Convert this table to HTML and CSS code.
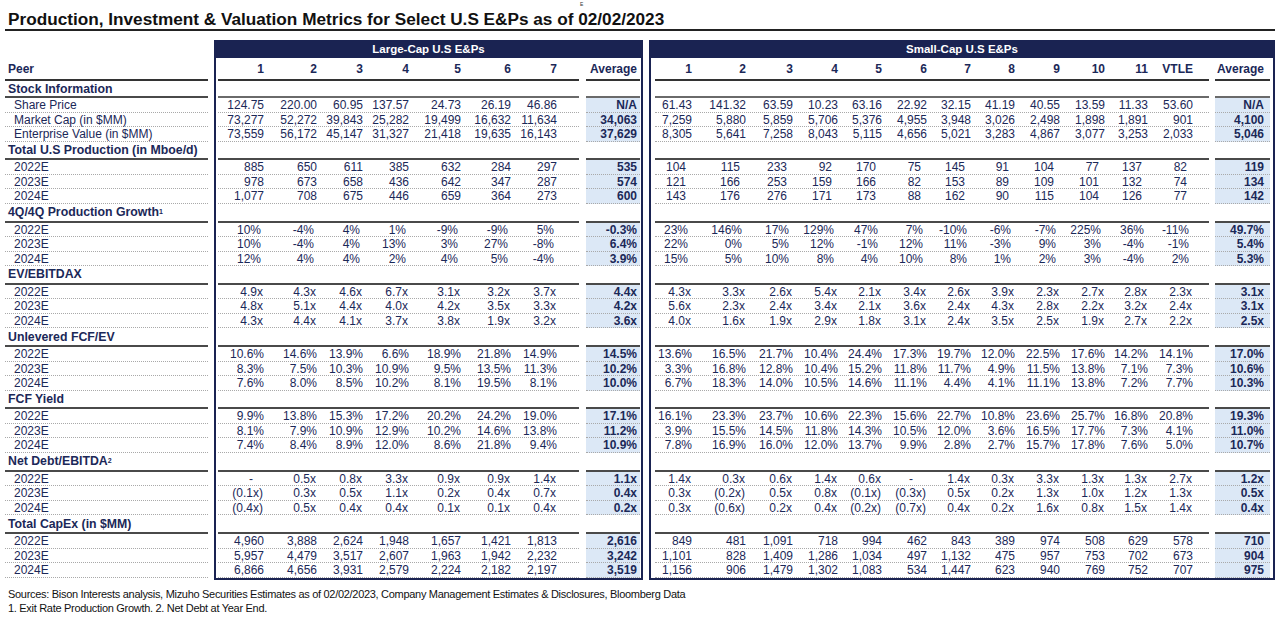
FILE: index.html
```html
<!DOCTYPE html>
<html>
<head>
<meta charset="utf-8">
<link rel="stylesheet" href="styles.css">
</head>
<body>
<div class="page">
  <div class="tiny">E</div>
  <h1 class="title">Production, Investment &amp; Valuation Metrics for Select U.S E&amp;Ps as of 02/02/2023</h1>
  <div class="tables">
    <div class="labels">
      <div class="spacer"></div>
      <div class="hd">Peer</div>
      <div class="sec first">Stock Information</div>
      <div class="row">Share Price</div>
      <div class="row">Market Cap (in $MM)</div>
      <div class="row">Enterprise Value (in $MM)</div>
      <div class="sec">Total U.S Production (in Mboe/d)</div>
      <div class="row">2022E</div><div class="row">2023E</div><div class="row">2024E</div>
      <div class="sec">4Q/4Q Production Growth<sup>1</sup></div>
      <div class="row">2022E</div><div class="row">2023E</div><div class="row">2024E</div>
      <div class="sec">EV/EBITDAX</div>
      <div class="row">2022E</div><div class="row">2023E</div><div class="row">2024E</div>
      <div class="sec">Unlevered FCF/EV</div>
      <div class="row">2022E</div><div class="row">2023E</div><div class="row">2024E</div>
      <div class="sec">FCF Yield</div>
      <div class="row">2022E</div><div class="row">2023E</div><div class="row">2024E</div>
      <div class="sec">Net Debt/EBITDA<sup>2</sup></div>
      <div class="row">2022E</div><div class="row">2023E</div><div class="row">2024E</div>
      <div class="sec">Total CapEx (in $MM)</div>
      <div class="row">2022E</div><div class="row">2023E</div><div class="row">2024E</div>
    </div>

    <div class="panel lp">
      <div class="band">Large-Cap U.S E&amp;Ps</div>
      <div class="hd"><div class="d"><span>1</span><span>2</span><span>3</span><span>4</span><span>5</span><span>6</span><span>7</span></div><div class="a">Average</div></div>
      <div class="sec first"><div class="d"></div><div class="a"></div></div>
      <div class="row"><div class="d"><span>124.75</span><span>220.00</span><span>60.95</span><span>137.57</span><span>24.73</span><span>26.19</span><span>46.86</span></div><div class="a">N/A</div></div>
      <div class="row"><div class="d"><span>73,277</span><span>52,272</span><span>39,843</span><span>25,282</span><span>19,499</span><span>16,632</span><span>11,634</span></div><div class="a">34,063</div></div>
      <div class="row"><div class="d"><span>73,559</span><span>56,172</span><span>45,147</span><span>31,327</span><span>21,418</span><span>19,635</span><span>16,143</span></div><div class="a">37,629</div></div>
      <div class="sec"><div class="d"></div><div class="a"></div></div>
      <div class="row"><div class="d"><span>885</span><span>650</span><span>611</span><span>385</span><span>632</span><span>284</span><span>297</span></div><div class="a">535</div></div>
      <div class="row"><div class="d"><span>978</span><span>673</span><span>658</span><span>436</span><span>642</span><span>347</span><span>287</span></div><div class="a">574</div></div>
      <div class="row"><div class="d"><span>1,077</span><span>708</span><span>675</span><span>446</span><span>659</span><span>364</span><span>273</span></div><div class="a">600</div></div>
      <div class="sec"><div class="d"></div><div class="a"></div></div>
      <div class="row g"><div class="d"><span>10%</span><span>-4%</span><span>4%</span><span>1%</span><span>-9%</span><span>-9%</span><span>5%</span></div><div class="a">-0.3%</div></div>
      <div class="row g"><div class="d"><span>10%</span><span>-4%</span><span>4%</span><span>13%</span><span>3%</span><span>27%</span><span>-8%</span></div><div class="a">6.4%</div></div>
      <div class="row g"><div class="d"><span>12%</span><span>4%</span><span>4%</span><span>2%</span><span>4%</span><span>5%</span><span>-4%</span></div><div class="a">3.9%</div></div>
      <div class="sec"><div class="d"></div><div class="a"></div></div>
      <div class="row x"><div class="d"><span>4.9x</span><span>4.3x</span><span>4.6x</span><span>6.7x</span><span>3.1x</span><span>3.2x</span><span>3.7x</span></div><div class="a">4.4x</div></div>
      <div class="row x"><div class="d"><span>4.8x</span><span>5.1x</span><span>4.4x</span><span>4.0x</span><span>4.2x</span><span>3.5x</span><span>3.3x</span></div><div class="a">4.2x</div></div>
      <div class="row x"><div class="d"><span>4.3x</span><span>4.4x</span><span>4.1x</span><span>3.7x</span><span>3.8x</span><span>1.9x</span><span>3.2x</span></div><div class="a">3.6x</div></div>
      <div class="sec"><div class="d"></div><div class="a"></div></div>
      <div class="row"><div class="d"><span>10.6%</span><span>14.6%</span><span>13.9%</span><span>6.6%</span><span>18.9%</span><span>21.8%</span><span>14.9%</span></div><div class="a">14.5%</div></div>
      <div class="row"><div class="d"><span>8.3%</span><span>7.5%</span><span>10.3%</span><span>10.9%</span><span>9.5%</span><span>13.5%</span><span>11.3%</span></div><div class="a">10.2%</div></div>
      <div class="row"><div class="d"><span>7.6%</span><span>8.0%</span><span>8.5%</span><span>10.2%</span><span>8.1%</span><span>19.5%</span><span>8.1%</span></div><div class="a">10.0%</div></div>
      <div class="sec"><div class="d"></div><div class="a"></div></div>
      <div class="row"><div class="d"><span>9.9%</span><span>13.8%</span><span>15.3%</span><span>17.2%</span><span>20.2%</span><span>24.2%</span><span>19.0%</span></div><div class="a">17.1%</div></div>
      <div class="row"><div class="d"><span>8.1%</span><span>7.9%</span><span>10.9%</span><span>12.9%</span><span>10.2%</span><span>14.6%</span><span>13.8%</span></div><div class="a">11.2%</div></div>
      <div class="row"><div class="d"><span>7.4%</span><span>8.4%</span><span>8.9%</span><span>12.0%</span><span>8.6%</span><span>21.8%</span><span>9.4%</span></div><div class="a">10.9%</div></div>
      <div class="sec"><div class="d"></div><div class="a"></div></div>
      <div class="row x"><div class="d"><span class="dash">-</span><span>0.5x</span><span>0.8x</span><span>3.3x</span><span>0.9x</span><span>0.9x</span><span>1.4x</span></div><div class="a">1.1x</div></div>
      <div class="row x"><div class="d"><span>(0.1x)</span><span>0.3x</span><span>0.5x</span><span>1.1x</span><span>0.2x</span><span>0.4x</span><span>0.7x</span></div><div class="a">0.4x</div></div>
      <div class="row x"><div class="d"><span>(0.4x)</span><span>0.5x</span><span>0.4x</span><span>0.4x</span><span>0.1x</span><span>0.1x</span><span>0.4x</span></div><div class="a">0.2x</div></div>
      <div class="sec"><div class="d"></div><div class="a"></div></div>
      <div class="row"><div class="d"><span>4,960</span><span>3,888</span><span>2,624</span><span>1,948</span><span>1,657</span><span>1,421</span><span>1,813</span></div><div class="a">2,616</div></div>
      <div class="row"><div class="d"><span>5,957</span><span>4,479</span><span>3,517</span><span>2,607</span><span>1,963</span><span>1,942</span><span>2,232</span></div><div class="a">3,242</div></div>
      <div class="row"><div class="d"><span>6,866</span><span>4,656</span><span>3,931</span><span>2,579</span><span>2,224</span><span>2,182</span><span>2,197</span></div><div class="a">3,519</div></div>
    </div>

    <div class="panel rp">
      <div class="band">Small-Cap U.S E&amp;Ps</div>
      <div class="hd"><div class="d"><span>1</span><span>2</span><span>3</span><span>4</span><span>5</span><span>6</span><span>7</span><span>8</span><span>9</span><span>10</span><span>11</span><span>VTLE</span></div><div class="a">Average</div></div>
      <div class="sec first"><div class="d"></div><div class="a"></div></div>
      <div class="row"><div class="d"><span>61.43</span><span>141.32</span><span>63.59</span><span>10.23</span><span>63.16</span><span>22.92</span><span>32.15</span><span>41.19</span><span>40.55</span><span>13.59</span><span>11.33</span><span>53.60</span></div><div class="a">N/A</div></div>
      <div class="row"><div class="d"><span>7,259</span><span>5,880</span><span>5,859</span><span>5,706</span><span>5,376</span><span>4,955</span><span>3,948</span><span>3,026</span><span>2,498</span><span>1,898</span><span>1,891</span><span>901</span></div><div class="a">4,100</div></div>
      <div class="row"><div class="d"><span>8,305</span><span>5,641</span><span>7,258</span><span>8,043</span><span>5,115</span><span>4,656</span><span>5,021</span><span>3,283</span><span>4,867</span><span>3,077</span><span>3,253</span><span>2,033</span></div><div class="a">5,046</div></div>
      <div class="sec"><div class="d"></div><div class="a"></div></div>
      <div class="row p"><div class="d"><span>104</span><span>115</span><span>233</span><span>92</span><span>170</span><span>75</span><span>145</span><span>91</span><span>104</span><span>77</span><span>137</span><span>82</span></div><div class="a">119</div></div>
      <div class="row p"><div class="d"><span>121</span><span>166</span><span>253</span><span>159</span><span>166</span><span>82</span><span>153</span><span>89</span><span>109</span><span>101</span><span>132</span><span>74</span></div><div class="a">134</div></div>
      <div class="row p"><div class="d"><span>143</span><span>176</span><span>276</span><span>171</span><span>173</span><span>88</span><span>162</span><span>90</span><span>115</span><span>104</span><span>126</span><span>77</span></div><div class="a">142</div></div>
      <div class="sec"><div class="d"></div><div class="a"></div></div>
      <div class="row g"><div class="d"><span>23%</span><span>146%</span><span>17%</span><span>129%</span><span>47%</span><span>7%</span><span>-10%</span><span>-6%</span><span>-7%</span><span>225%</span><span>36%</span><span>-11%</span></div><div class="a">49.7%</div></div>
      <div class="row g"><div class="d"><span>22%</span><span>0%</span><span>5%</span><span>12%</span><span>-1%</span><span>12%</span><span>11%</span><span>-3%</span><span>9%</span><span>3%</span><span>-4%</span><span>-1%</span></div><div class="a">5.4%</div></div>
      <div class="row g"><div class="d"><span>15%</span><span>5%</span><span>10%</span><span>8%</span><span>4%</span><span>10%</span><span>8%</span><span>1%</span><span>2%</span><span>3%</span><span>-4%</span><span>2%</span></div><div class="a">5.3%</div></div>
      <div class="sec"><div class="d"></div><div class="a"></div></div>
      <div class="row x"><div class="d"><span>4.3x</span><span>3.3x</span><span>2.6x</span><span>5.4x</span><span>2.1x</span><span>3.4x</span><span>2.6x</span><span>3.9x</span><span>2.3x</span><span>2.7x</span><span>2.8x</span><span>2.3x</span></div><div class="a">3.1x</div></div>
      <div class="row x"><div class="d"><span>5.6x</span><span>2.3x</span><span>2.4x</span><span>3.4x</span><span>2.1x</span><span>3.6x</span><span>2.4x</span><span>4.3x</span><span>2.8x</span><span>2.2x</span><span>3.2x</span><span>2.4x</span></div><div class="a">3.1x</div></div>
      <div class="row x"><div class="d"><span>4.0x</span><span>1.6x</span><span>1.9x</span><span>2.9x</span><span>1.8x</span><span>3.1x</span><span>2.4x</span><span>3.5x</span><span>2.5x</span><span>1.9x</span><span>2.7x</span><span>2.2x</span></div><div class="a">2.5x</div></div>
      <div class="sec"><div class="d"></div><div class="a"></div></div>
      <div class="row"><div class="d"><span>13.6%</span><span>16.5%</span><span>21.7%</span><span>10.4%</span><span>24.4%</span><span>17.3%</span><span>19.7%</span><span>12.0%</span><span>22.5%</span><span>17.6%</span><span>14.2%</span><span>14.1%</span></div><div class="a">17.0%</div></div>
      <div class="row"><div class="d"><span>3.3%</span><span>16.8%</span><span>12.8%</span><span>10.4%</span><span>15.2%</span><span>11.8%</span><span>11.7%</span><span>4.9%</span><span>11.5%</span><span>13.8%</span><span>7.1%</span><span>7.3%</span></div><div class="a">10.6%</div></div>
      <div class="row"><div class="d"><span>6.7%</span><span>18.3%</span><span>14.0%</span><span>10.5%</span><span>14.6%</span><span>11.1%</span><span>4.4%</span><span>4.1%</span><span>11.1%</span><span>13.8%</span><span>7.2%</span><span>7.7%</span></div><div class="a">10.3%</div></div>
      <div class="sec"><div class="d"></div><div class="a"></div></div>
      <div class="row"><div class="d"><span>16.1%</span><span>23.3%</span><span>23.7%</span><span>10.6%</span><span>22.3%</span><span>15.6%</span><span>22.7%</span><span>10.8%</span><span>23.6%</span><span>25.7%</span><span>16.8%</span><span>20.8%</span></div><div class="a">19.3%</div></div>
      <div class="row"><div class="d"><span>3.9%</span><span>15.5%</span><span>14.5%</span><span>11.8%</span><span>14.3%</span><span>10.5%</span><span>12.0%</span><span>3.6%</span><span>16.5%</span><span>17.7%</span><span>7.3%</span><span>4.1%</span></div><div class="a">11.0%</div></div>
      <div class="row"><div class="d"><span>7.8%</span><span>16.9%</span><span>16.0%</span><span>12.0%</span><span>13.7%</span><span>9.9%</span><span>2.8%</span><span>2.7%</span><span>15.7%</span><span>17.8%</span><span>7.6%</span><span>5.0%</span></div><div class="a">10.7%</div></div>
      <div class="sec"><div class="d"></div><div class="a"></div></div>
      <div class="row x"><div class="d"><span>1.4x</span><span>0.3x</span><span>0.6x</span><span>1.4x</span><span>0.6x</span><span class="dash">-</span><span>1.4x</span><span>0.3x</span><span>3.3x</span><span>1.3x</span><span>1.3x</span><span>2.7x</span></div><div class="a">1.2x</div></div>
      <div class="row x"><div class="d"><span>0.3x</span><span>(0.2x)</span><span>0.5x</span><span>0.8x</span><span>(0.1x)</span><span>(0.3x)</span><span>0.5x</span><span>0.2x</span><span>1.3x</span><span>1.0x</span><span>1.2x</span><span>1.3x</span></div><div class="a">0.5x</div></div>
      <div class="row x"><div class="d"><span>0.3x</span><span>(0.6x)</span><span>0.2x</span><span>0.4x</span><span>(0.2x)</span><span>(0.7x)</span><span>0.4x</span><span>0.2x</span><span>1.6x</span><span>0.8x</span><span>1.5x</span><span>1.4x</span></div><div class="a">0.4x</div></div>
      <div class="sec"><div class="d"></div><div class="a"></div></div>
      <div class="row"><div class="d"><span>849</span><span>481</span><span>1,091</span><span>718</span><span>994</span><span>462</span><span>843</span><span>389</span><span>974</span><span>508</span><span>629</span><span>578</span></div><div class="a">710</div></div>
      <div class="row"><div class="d"><span>1,101</span><span>828</span><span>1,409</span><span>1,286</span><span>1,034</span><span>497</span><span>1,132</span><span>475</span><span>957</span><span>753</span><span>702</span><span>673</span></div><div class="a">904</div></div>
      <div class="row"><div class="d"><span>1,156</span><span>906</span><span>1,479</span><span>1,302</span><span>1,083</span><span>534</span><span>1,447</span><span>623</span><span>940</span><span>769</span><span>752</span><span>707</span></div><div class="a">975</div></div>
    </div>
  </div>
  <div class="notes">
    <p>Sources: Bison Interests analysis, Mizuho Securities Estimates as of 02/02/2023, Company Management Estimates &amp; Disclosures, Bloomberg Data</p>
    <p>1. Exit Rate Production Growth. 2. Net Debt at Year End.</p>
  </div>
</div>
</body>
</html>
```
FILE: styles.css
```css
* { box-sizing: border-box; margin: 0; padding: 0; }
html, body { background: #fff; }
body {
  margin: 0;
  width: 1280px;
  height: 630px;
  overflow: hidden;
  font-family: "Liberation Sans", Arial, sans-serif;
  font-size: 12px;
  color: #1b2858;
}
.page { padding: 0 5px; }
.tiny {
  height: 9px;
  font-size: 5px;
  line-height: 9px;
  padding-left: 575px;
  color: #333;
}
.title {
  font-size: 17.2px;
  font-weight: bold;
  color: #111;
  line-height: 20px;
  height: 22px;
  border-bottom: 2px solid #222;
  padding-left: 3px;
  white-space: nowrap;
}
.tables {
  display: flex;
  align-items: flex-start;
  margin-top: 9px;
}
.labels { width: 203px; flex: none; }
.labels .spacer { height: 18px; }
.labels .hd {
  height: 23px;
  border-bottom: 2px solid #333;
  font-weight: bold;
  padding-left: 3px;
  display: flex;
  align-items: center;
}
.labels .sec {
  height: 18.8px;
  border-bottom: 2px solid #4a4a4a;
  font-weight: bold;
  font-size: 12.3px;
  padding-left: 3px;
  display: flex;
  align-items: center;
  white-space: nowrap;
}
.labels .sec.first { height: 17px; }
.labels .row {
  height: 14.5px;
  line-height: 14px;
  border-bottom: 1px dotted #a9a9a9;
  padding-left: 9px;
  white-space: nowrap;
}
sup { font-size: 7px; vertical-align: 5px; line-height: 0; }

.panel {
  flex: none;
  border: 2px solid #1a2352;
}
.panel.lp { width: 429px; margin-left: 6px; }
.panel.rp { width: 626px; margin-left: 6px; }
.band {
  height: 16px;
  line-height: 15px;
  background: #1a2352;
  color: #fff;
  font-weight: bold;
  font-size: 11.5px;
  text-align: center;
}
.panel .hd, .panel .sec, .panel .row { display: flex; }
.lp .hd, .lp .sec, .lp .row { padding: 0 1px 0 2px; column-gap: 7px; }
.rp .hd, .rp .sec, .rp .row { padding: 0 3px 0 4px; column-gap: 6px; }
.d { display: grid; flex: none; }
.lp .d { width: 361px; grid-template-columns: 48px 53px 46px 46px 52px 50px 46px 20px; }
.rp .d { width: 554px; grid-template-columns: 39px 54px 47px 45px 44px 45px 44px 44px 45px 45px 43px 45px 14px; }
.a { flex: none; text-align: right; white-space: nowrap; }
.lp .a { width: 54px; padding-right: 3px; }
.rp .a { width: 55px; padding-right: 6px; }
.d span { text-align: right; padding-right: 2px; white-space: nowrap; }

.panel .hd { height: 23px; }
.panel .hd .d, .panel .hd .a {
  border-bottom: 2px solid #333;
  font-weight: bold;
  align-items: center;
  display: grid;
}
.panel .hd .a { display: flex; align-items: center; justify-content: flex-end; }
.panel .sec { height: 18.8px; }
.panel .sec.first { height: 17px; }
.panel .sec .d, .panel .sec .a { border-bottom: 2px solid #4a4a4a; }
.panel .sec.first .d, .panel .sec.first .a { border-bottom-color: #6a6a6a; }
.panel .row { height: 14.5px; line-height: 14px; }
.panel .row .d, .panel .row .a { border-bottom: 1px dotted #a9a9a9; }
.panel .row .a { background: #dce8f6; font-weight: bold; }

.lp .g .d span { padding-right: 5px; }
.rp .g .d span { padding-right: 6px; }
.x .d span { padding-right: 3px; }
.rp .p .d span { padding-right: 8px; }
.lp .d span.dash { padding-right: 13px; }
.rp .d span.dash { padding-right: 16px; }

.notes {
  margin-top: 7px;
  padding-left: 3px;
  font-size: 11px;
  letter-spacing: -0.3px;
  line-height: 14px;
  color: #111;
}
```
